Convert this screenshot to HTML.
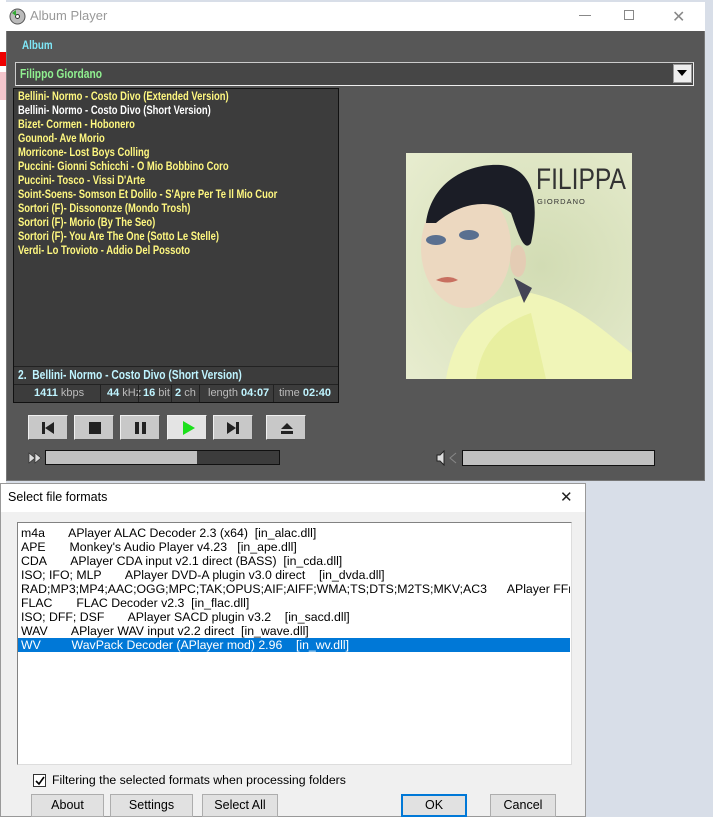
<!DOCTYPE html>
<html><head><meta charset="utf-8"><style>
*{margin:0;padding:0;box-sizing:border-box}
body{width:713px;height:817px;overflow:hidden;background:#d8dee8;position:relative;font-family:"Liberation Sans",sans-serif}
.abs{position:absolute}
.cond{font-family:"Liberation Sans Narrow","Liberation Sans",sans-serif;font-weight:bold}
.sq{transform:scaleX(.82);transform-origin:0 0}
.tl div{height:14px;line-height:14px;white-space:nowrap}
.btn{position:absolute;top:415px;width:40px;height:25px;background:#c8c8c8;border-top:1px solid #f0f0f0;border-left:1px solid #f0f0f0;border-right:1px solid #555;border-bottom:1px solid #555}
.fl div{height:14px;line-height:14px;font-size:12.3px;white-space:nowrap;padding-left:3px;color:#000}
.db{position:absolute;top:794px;height:23px;background:#e1e1e1;border:1px solid #adadad;font-size:12.5px;text-align:center;line-height:21px}
</style></head><body>
<div class="abs" style="left:0;top:0;width:6px;height:817px;background:#fff"></div>
<div class="abs" style="left:0;top:52px;width:6px;height:14px;background:#e00"></div>
<div class="abs" style="left:0;top:72px;width:6px;height:28px;background:#f3c6cc"></div>
<div class="abs" style="left:0;top:600px;width:6px;height:217px;background:#1e5fb0"></div>
<!-- main window -->
<div class="abs" style="left:6px;top:2px;width:699px;height:479px;background:#575757;border:1px solid #777"></div>
<div class="abs" style="left:6px;top:2px;width:699px;height:29px;background:#fff"></div>
<svg class="abs" style="left:9px;top:8px" width="17" height="17"><circle cx="8.5" cy="8.5" r="7.5" fill="#bbb" stroke="#555"/><circle cx="8.5" cy="8.5" r="2" fill="#fff" stroke="#333"/><path d="M3 5l4-3 0 6z" fill="#3a3"/></svg>
<div class="abs" style="left:30px;top:8px;font-size:13px;color:#999">Album Player</div>
<div class="abs" style="left:579px;top:15px;width:12px;height:1px;background:#888"></div>
<div class="abs" style="left:624px;top:10px;width:10px;height:10px;border:1px solid #888"></div>
<div class="abs" style="left:672px;top:7px;font-size:16px;color:#888">✕</div>
<div class="abs cond sq" style="left:22px;top:38px;font-size:12px;color:#7fe8f8">Album</div>
<div class="abs" style="left:15px;top:62px;width:679px;height:24px;background:#464646;border:1px solid #ccc;border-right-color:#eee;border-bottom-color:#eee"></div>
<div class="abs cond sq" style="left:20px;top:67px;font-size:12.5px;color:#90f090">Filippo Giordano</div>
<div class="abs" style="left:673px;top:64px;width:19px;height:19px;background:#eee;border:1px solid #999"></div>
<svg class="abs" style="left:677px;top:70px" width="11" height="7"><path d="M0 0h10L5 6z" fill="#000"/></svg>
<div class="abs" style="left:13px;top:88px;width:326px;height:315px;background:#3c3c3c;border:1px solid #111"></div>
<div class="abs tl cond sq" style="left:18px;top:90px;font-size:11.5px;color:#fff880">
<div>Bellini- Normo - Costo Divo (Extended Version)</div>
<div style="color:#fff">Bellini- Normo - Costo Divo (Short Version)</div>
<div>Bizet- Cormen - Hobonero</div>
<div>Gounod- Ave Morio</div>
<div>Morricone- Lost Boys Colling</div>
<div>Puccini- Gionni Schicchi - O Mio Bobbino Coro</div>
<div>Puccini- Tosco - Vissi D'Arte</div>
<div>Soint-Soens- Somson Et Dolilo - S'Apre Per Te Il Mio Cuor</div>
<div>Sortori (F)- Dissononze (Mondo Trosh)</div>
<div>Sortori (F)- Morio (By The Seo)</div>
<div>Sortori (F)- You Are The One (Sotto Le Stelle)</div>
<div>Verdi- Lo Trovioto - Addio Del Possoto</div>
</div>
<div class="abs" style="left:14px;top:366px;width:324px;height:1px;background:#222"></div>
<div class="abs cond sq" style="left:18px;top:368px;font-size:12.5px;color:#bff4ff;white-space:nowrap">2.&nbsp; Bellini- Normo - Costo Divo (Short Version)</div>
<div class="abs" style="left:14px;top:384px;width:324px;height:1px;background:#222"></div>
<div class="abs cond" style="left:14px;top:385px;width:324px;height:17px;font-size:11px;line-height:17px;color:#bff4ff;white-space:nowrap">
<span class="abs" style="left:20px">1411 <span style="color:#bbb;font-weight:normal">kbps</span></span>
<span class="abs" style="left:86px;border-left:1px solid #222;padding-left:6px">44 <span style="color:#bbb;font-weight:normal">kHz</span></span>
<span class="abs" style="left:124px;border-left:1px solid #222;padding-left:4px">16 <span style="color:#bbb;font-weight:normal">bit</span></span>
<span class="abs" style="left:157px;border-left:1px solid #222;padding-left:3px">2 <span style="color:#bbb;font-weight:normal">ch</span></span>
<span class="abs" style="left:185px;border-left:1px solid #222;padding-left:8px"><span style="color:#bbb;font-weight:normal">length</span> 04:07</span>
<span class="abs" style="left:259px;border-left:1px solid #222;padding-left:5px"><span style="color:#bbb;font-weight:normal">time</span> 02:40</span>
</div>
<!-- buttons -->
<div class="btn" style="left:28px"><svg width="40" height="25"><path d="M13 6h3v12h-3zM16 12l9-6v12z" fill="#222"/></svg></div>
<div class="btn" style="left:74px"><svg width="40" height="25"><rect x="14" y="6" width="12" height="12" fill="#222"/></svg></div>
<div class="btn" style="left:120px"><svg width="40" height="25"><path d="M14 6h4v12h-4zM21 6h4v12h-4z" fill="#222"/></svg></div>
<div class="btn" style="left:167px;background:#e4e4e4"><svg width="40" height="25"><path d="M15 5l12 7-12 7z" fill="#1ce01c"/></svg></div>
<div class="btn" style="left:213px"><svg width="40" height="25"><path d="M13 6l9 6-9 6zM22 6h3v12h-3z" fill="#222"/></svg></div>
<div class="btn" style="left:266px"><svg width="40" height="25"><path d="M14 13l6-6 6 6zM14 15h12v3H14z" fill="#222"/></svg></div>
<svg class="abs" style="left:28px;top:452px" width="14" height="12"><path d="M1 1l6 5-6 5zM7 1l6 5-6 5z" fill="#ddd" stroke="#333" stroke-width=".7"/></svg>
<div class="abs" style="left:45px;top:450px;width:235px;height:15px;background:#3c3c3c;border:1px solid #111"></div>
<div class="abs" style="left:46px;top:451px;width:151px;height:13px;background:#c0c0c0"></div>
<svg class="abs" style="left:436px;top:450px" width="22" height="16"><path d="M1 5h3l4-4v14l-4-4H1z" fill="#ddd" stroke="#222"/><path d="M20 3l-6 5 6 5" fill="none" stroke="#888"/></svg>
<div class="abs" style="left:462px;top:450px;width:193px;height:16px;background:#c0c0c0;border:1px solid #111"></div>
<!-- album art -->
<svg class="abs" style="left:406px;top:153px" width="226" height="226">
<defs><radialGradient id="bg" cx=".6" cy=".5" r=".8"><stop offset="0" stop-color="#d2dcb4"/><stop offset="1" stop-color="#e8edd0"/></radialGradient></defs>
<rect width="226" height="226" fill="url(#bg)"/>
<path d="M40 226C50 170 80 150 125 140 170 150 200 180 226 200V226z" fill="#f0f5b8"/>
<path d="M70 226C75 190 95 170 125 160l15 66z" fill="#e8efa0"/>
<ellipse cx="60" cy="95" rx="45" ry="60" fill="#ecd8c0"/>
<path d="M20 70C25 30 60 10 95 12 125 15 135 45 125 90 118 100 112 80 105 60 90 48 60 45 30 70z" fill="#1b1d26"/>
<ellipse cx="112" cy="108" rx="8" ry="16" fill="#e4ccb4"/>
<path d="M108 125l10 25 8-15z" fill="#445"/>
<ellipse cx="30" cy="87" rx="10" ry="5" fill="#5a7090"/><ellipse cx="63" cy="82" rx="10" ry="5" fill="#5a7090"/>
<path d="M30 127q12-6 22 0q-10 5-22 0z" fill="#c87060"/>
<text x="130" y="36" font-family="Liberation Sans" font-size="30" fill="#333" textLength="90" lengthAdjust="spacingAndGlyphs">FILIPPA</text>
<text x="131" y="51" font-family="Liberation Sans" font-size="7.5" fill="#333" letter-spacing="1">GIORDANO</text>
</svg>
<!-- dialog -->
<div class="abs" style="left:0;top:483px;width:586px;height:334px;background:#f0f0f0;border:1px solid #999"></div>
<div class="abs" style="left:1px;top:484px;width:584px;height:28px;background:#fff"></div>
<div class="abs" style="left:8px;top:490px;font-size:12.5px;color:#000">Select file formats</div>
<div class="abs" style="left:560px;top:488px;font-size:15px;color:#222">✕</div>
<div class="abs" style="left:17px;top:522px;width:555px;height:243px;background:#fff;border:1px solid #828282;border-right-color:#ddd;border-bottom-color:#ddd;overflow:hidden"></div>
<div class="abs fl" style="left:18px;top:526px;width:552px;overflow:hidden">
<div>m4a&nbsp;&nbsp;&nbsp;&nbsp;&nbsp;&nbsp; APlayer ALAC Decoder 2.3 (x64)&nbsp; [in_alac.dll]</div>
<div>APE&nbsp;&nbsp;&nbsp;&nbsp;&nbsp;&nbsp; Monkey's Audio Player v4.23&nbsp;&nbsp; [in_ape.dll]</div>
<div>CDA&nbsp;&nbsp;&nbsp;&nbsp;&nbsp;&nbsp; APlayer CDA input v2.1 direct (BASS)&nbsp; [in_cda.dll]</div>
<div>ISO; IFO; MLP&nbsp;&nbsp;&nbsp;&nbsp;&nbsp;&nbsp; APlayer DVD-A plugin v3.0 direct&nbsp;&nbsp;&nbsp; [in_dvda.dll]</div>
<div>RAD;MP3;MP4;AAC;OGG;MPC;TAK;OPUS;AIF;AIFF;WMA;TS;DTS;M2TS;MKV;AC3&nbsp;&nbsp;&nbsp;&nbsp;&nbsp; APlayer FFmpeg</div>
<div>FLAC&nbsp;&nbsp;&nbsp;&nbsp;&nbsp;&nbsp; FLAC Decoder v2.3&nbsp; [in_flac.dll]</div>
<div>ISO; DFF; DSF&nbsp;&nbsp;&nbsp;&nbsp;&nbsp;&nbsp; APlayer SACD plugin v3.2&nbsp;&nbsp;&nbsp; [in_sacd.dll]</div>
<div>WAV&nbsp;&nbsp;&nbsp;&nbsp;&nbsp;&nbsp; APlayer WAV input v2.2 direct&nbsp;&nbsp;[in_wave.dll]</div>
<div style="background:#0078d7;color:#fff">WV&nbsp;&nbsp;&nbsp;&nbsp;&nbsp;&nbsp;&nbsp;&nbsp; WavPack Decoder (APlayer mod) 2.96&nbsp;&nbsp;&nbsp; [in_wv.dll]</div>
</div>
<div class="abs" style="left:33px;top:774px;width:13px;height:13px;background:#fff;border:1px solid #333"></div>
<svg class="abs" style="left:35px;top:776px" width="10" height="10"><path d="M1 5l3 3 5-7" fill="none" stroke="#000" stroke-width="1.6"/></svg>
<div class="abs" style="left:52px;top:773px;font-size:12.3px">Filtering the selected formats when processing folders</div>
<div class="db" style="left:31px;width:73px">About</div>
<div class="db" style="left:110px;width:83px">Settings</div>
<div class="db" style="left:202px;width:76px">Select All</div>
<div class="db" style="left:401px;width:66px;border:2px solid #0078d7;line-height:19px">OK</div>
<div class="db" style="left:490px;width:66px">Cancel</div>
</body></html>
